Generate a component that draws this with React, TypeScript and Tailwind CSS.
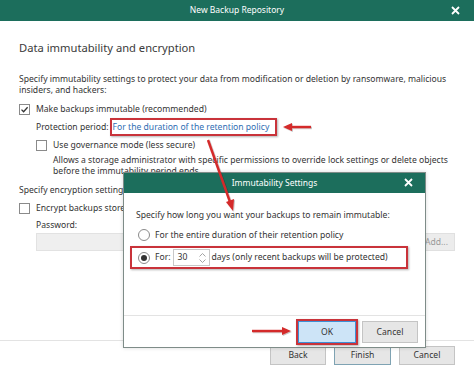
import React from "react";

const font = { fontFamily: '"Noto Sans", "Open Sans", sans-serif' };

function Check({ checked }: { checked?: boolean }) {
  return (
    <div className="w-[11px] h-[11px] border border-[#8a8a8a] bg-white flex items-center justify-center shrink-0">
      {checked && (
        <svg width="9" height="9" viewBox="0 0 9 9">
          <path d="M1.5 4.6 L3.6 6.7 L7.6 2.2" fill="none" stroke="#333" strokeWidth="1.3" />
        </svg>
      )}
    </div>
  );
}

function Radio({ checked }: { checked?: boolean }) {
  return (
    <div className="w-[12px] h-[12px] rounded-full border border-[#8a8a8a] bg-white flex items-center justify-center shrink-0">
      {checked && <div className="w-[6px] h-[6px] rounded-full bg-[#333]" />}
    </div>
  );
}

function Btn({ children, def }: { children: React.ReactNode; def?: boolean }) {
  return (
    <div
      className={
        "h-[19px] flex items-center justify-center bg-[#e6e6e6] text-[8.6px] text-[#333] border " +
        (def ? "border-[#7fa3b3] w-[57px]" : "border-[#c4c4c4] w-[56px]")
      }
    >
      {children}
    </div>
  );
}

export default function App() {
  return (
    <div className="relative w-[474px] h-[372px] bg-white overflow-hidden text-[#333]" style={font}>
      {/* Main window */}
      <div className="flex flex-col h-full">
        <div className="relative h-[21px] bg-[#1c6e5c] flex items-center justify-center text-white text-[8.5px] shrink-0">
          New Backup Repository
          <svg className="absolute right-[14px] top-[6px]" width="9" height="9" viewBox="0 0 9 9">
            <path d="M1 1 L8 8 M8 1 L1 8" stroke="white" strokeWidth="1.8" />
          </svg>
        </div>

        <div className="flex-1 pl-[19px] pr-[10px] flex flex-col">
          <div className="mt-[19px] h-[16px] flex items-center text-[11.2px] text-[#3a3a3a]">
            Data immutability and encryption
          </div>
          <div className="mt-[18px] text-[8.6px] leading-[11px] whitespace-nowrap">
            Specify immutability settings to protect your data from modification or deletion by ransomware, malicious
            <br />
            insiders, and hackers:
          </div>
          <div className="mt-[6px] h-[14px] flex items-center gap-[6px] text-[8.6px]">
            <Check checked />
            <span>Make backups immutable (recommended)</span>
          </div>
          <div className="mt-[2px] h-[18px] flex items-center text-[8.6px] pl-[17px]">
            <span>Protection period:</span>
            <span className="ml-[1px] h-[18px] flex items-center pl-[1px] pr-[6px] border-2 border-[#c9333a] text-[#2f6db3] shadow-[1px_1px_2px_rgba(0,0,0,0.3)]">
              For the duration of the retention policy
            </span>
          </div>
          <div className="mt-[2px] h-[14px] flex items-center gap-[6px] text-[8.6px] pl-[17px]">
            <Check />
            <span>Use governance mode (less secure)</span>
          </div>
          <div className="mt-[3px] text-[8.6px] leading-[11px] pl-[34px] whitespace-nowrap">
            Allows a storage administrator with specific permissions to override lock settings or delete objects
            <br />
            before the immutability period ends.
          </div>
          <div className="mt-[7px] h-[12px] flex items-center text-[8.6px]">Specify encryption settings:</div>
          <div className="mt-[5px] h-[14px] flex items-center gap-[6px] text-[8.6px]">
            <Check />
            <span>Encrypt backups stored in this repository</span>
          </div>
          <div className="mt-[4px] h-[12px] flex items-center text-[8.6px] pl-[17px]">Password:</div>
          <div className="mt-[2px] flex gap-[6px] pl-[17px] pr-[9px]">
            <div className="flex-1 h-[18px] bg-[#efefef] border border-[#e2e2e2]" />
            <div className="w-[37px] h-[18px] bg-[#ececec] border border-[#e0e0e0] flex items-center justify-center text-[8.6px] text-[#9a9a9a]">
              Add...
            </div>
          </div>
        </div>

        <div className="h-[32px] border-t border-[#e3e3e3] pt-[5px] pr-[19px] flex justify-end gap-[8px] shrink-0">
          <Btn>Back</Btn>
          <Btn def>Finish</Btn>
          <Btn>Cancel</Btn>
        </div>
      </div>

      {/* Immutability Settings dialog */}
      <div className="absolute left-[123px] top-[172px] w-[303px] h-[176px] border border-[#7e8c88] bg-white flex flex-col shadow-[0_0_4px_rgba(0,0,0,0.15)]">
        <div className="relative h-[20px] bg-[#1c6e5c] flex items-center justify-center text-white text-[8.5px] shrink-0">
          Immutability Settings
          <svg className="absolute right-[12px] top-[5px]" width="9" height="9" viewBox="0 0 9 9">
            <path d="M1 1 L8 8 M8 1 L1 8" stroke="white" strokeWidth="1.8" />
          </svg>
        </div>
        <div className="flex-1 flex flex-col pl-[12px]">
          <div className="mt-[16px] h-[12px] flex items-center text-[8.6px]">
            Specify how long you want your backups to remain immutable:
          </div>
          <div className="mt-[7px] h-[14px] flex items-center gap-[5px] text-[8.6px] pl-[2px]">
            <Radio />
            <span>For the entire duration of their retention policy</span>
          </div>
          <div className="mt-[4px] ml-[-6px] w-[278px] h-[23px] border-2 border-[#c9333a] shadow-[1px_1px_2px_rgba(0,0,0,0.3)] flex items-center pl-[6px] text-[8.6px] whitespace-nowrap">
            <Radio checked />
            <span className="ml-[5px]">For:</span>
            <div className="ml-[2px] w-[37px] h-[17px] border border-[#c8c8c8] flex items-center">
              <span className="flex-1 pl-[4px]">30</span>
              <div className="w-[12px] h-full flex flex-col items-center justify-center gap-[2px]">
                <svg width="7" height="4" viewBox="0 0 7 4">
                  <path d="M0.5 3.5 L3.5 0.5 L6.5 3.5" fill="none" stroke="#9a9a9a" strokeWidth="0.9" />
                </svg>
                <svg width="7" height="4" viewBox="0 0 7 4">
                  <path d="M0.5 0.5 L3.5 3.5 L6.5 0.5" fill="none" stroke="#9a9a9a" strokeWidth="0.9" />
                </svg>
              </div>
            </div>
            <span className="ml-[2px]">days (only recent backups will be protected)</span>
          </div>
        </div>
        <div className="h-[32px] border-t border-[#e3e3e3] pt-[3px] pr-[7px] flex justify-end gap-[4px] shrink-0">
          <div className="h-[26px] border-2 border-[#c9333a] shadow-[1px_1px_2px_rgba(0,0,0,0.3)]">
            <div className="w-[58px] h-[22px] bg-[#cde4f7] border border-[#3c8fd6] flex items-center justify-center text-[8.6px]">
              OK
            </div>
          </div>
          <div className="mt-[2px] w-[56px] h-[22px] bg-[#e6e6e6] border border-[#c4c4c4] flex items-center justify-center text-[8.6px]">
            Cancel
          </div>
        </div>
      </div>

      {/* Red arrows */}
      <svg className="absolute inset-0 pointer-events-none" width="474" height="372" viewBox="0 0 474 372">
        <defs>
          <filter id="sh" x="-20%" y="-20%" width="140%" height="140%">
            <feDropShadow dx="0.8" dy="0.8" stdDeviation="0.6" floodColor="#000" floodOpacity="0.3" />
          </filter>
        </defs>
        <g fill="#d42a2a" stroke="#d42a2a" filter="url(#sh)">
          <line x1="311" y1="127" x2="290" y2="127" strokeWidth="2.4" />
          <polygon points="283,127 292,123 292,131" stroke="none" />
          <line x1="208" y1="140" x2="230" y2="202" strokeWidth="2.4" />
          <polygon points="233,211 226,202 234,199" stroke="none" />
          <line x1="252" y1="331" x2="283" y2="331" strokeWidth="2.4" />
          <polygon points="291,331 282,327 282,335" stroke="none" />
        </g>
      </svg>
    </div>
  );
}
